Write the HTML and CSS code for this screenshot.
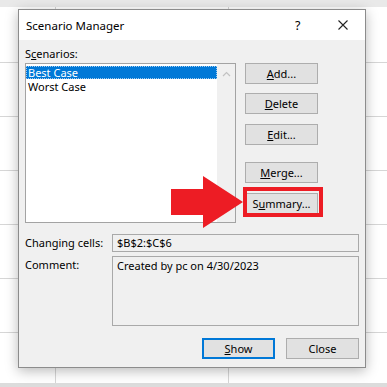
FILE: index.html
```html
<!DOCTYPE html>
<html>
<head>
<meta charset="utf-8">
<link rel="stylesheet" href="styles.css">
</head>
<body>
<div class="desk">
  <div class="dialog">
    <div class="titlebar">
      <span class="title">Scenario Manager</span>
      <span class="help">?</span>
      <svg class="close-x" width="10" height="10" viewBox="0 0 10 10"><path d="M0.5 0.5L9.5 9.5M9.5 0.5L0.5 9.5" stroke="#222" stroke-width="1.1" fill="none"/></svg>
    </div>
    <div class="content">
      <div class="label-top">S<u>c</u>enarios:</div>
      <div class="top-row">
        <div class="listbox">
          <div class="items">
            <div class="item selected">Best Case</div>
            <div class="item">Worst Case</div>
          </div>
          <div class="scrollbar">
            <svg width="9" height="6" viewBox="0 0 9 6"><path d="M1 5L4.5 1.5L8 5" stroke="#c2c2c2" stroke-width="1.2" fill="none"/></svg>
          </div>
        </div>
        <div class="btn-col">
          <div class="btn b-add"><u>A</u>dd...</div>
          <div class="btn b-del"><u>D</u>elete</div>
          <div class="btn b-edit"><u>E</u>dit...</div>
          <div class="btn b-merge"><u>M</u>erge...</div>
          <div class="btn b-sum">S<u>u</u>mmary...</div>
        </div>
      </div>
      <div class="field-row">
        <div class="flabel">Changing cells:</div>
        <div class="field">$B$2:$C$6</div>
      </div>
      <div class="field-row comment-row">
        <div class="flabel">Comment:</div>
        <div class="field comment">Created by pc on 4/30/2023</div>
      </div>
      <div class="bottom-row">
        <div class="btn default"><u>S</u>how</div>
        <div class="btn">Close</div>
      </div>
    </div>
    <svg class="arrow" width="72" height="52" viewBox="0 0 72 52"><path d="M0 13H32V0L72 26L32 52V39H0Z" fill="#ed1c24"/></svg>
    <div class="redbox"></div>
  </div>
</div>
</body>
</html>
```
FILE: styles.css
```css
html, body {
  margin: 0;
  padding: 0;
}
body {
  width: 387px;
  height: 387px;
  overflow: hidden;
  font-family: "Noto Sans", "Liberation Sans", sans-serif;
  font-size: 11px;
  color: #000;
}
.desk {
  width: 387px;
  height: 387px;
  box-sizing: border-box;
  padding: 9px 0 0 18px;
  background:
    linear-gradient(#e9e9e9, #e9e9e9) top left / 387px 7px no-repeat,
    linear-gradient(#dcdcdc, #dcdcdc) bottom left / 387px 4px no-repeat,
    linear-gradient(90deg, transparent 55px, #d6d6d6 55px, #d6d6d6 56px, transparent 56px) 0 0 / 387px 387px no-repeat,
    linear-gradient(90deg, transparent 228px, #d6d6d6 228px, #d6d6d6 229px, transparent 229px) 0 0 / 387px 387px no-repeat,
    repeating-linear-gradient(180deg, transparent 0, transparent 8px, #d6d6d6 8px, #d6d6d6 9px, transparent 9px, transparent 54px) 0 54px / 387px 387px no-repeat,
    #ffffff;
}
.dialog {
  position: relative;
  width: 348px;
  height: 359px;
  box-sizing: border-box;
  border: 1px solid #8c8c8c;
  background: #f0f0f0;
  box-shadow: 0 3px 12px rgba(0, 0, 0, 0.28);
}
.titlebar {
  height: 30px;
  background: #fff;
  display: flex;
  align-items: center;
  padding-left: 7px;
}
.title {
  font-size: 11.5px;
  flex: 1;
}
.help {
  font-size: 12.5px;
  width: 10px;
  margin-right: 33px;
}
.close-x {
  margin-right: 17px;
}
.content {
  padding: 6px 6px 0 6px;
}
.label-top {
  height: 16px;
  line-height: 16px;
  margin-bottom: 1px;
}
.top-row {
  display: flex;
}
.listbox {
  width: 211px;
  height: 160px;
  box-sizing: border-box;
  border: 1px solid #a3a3a3;
  background: #fff;
  display: flex;
  padding: 1px 0 0 0;
}
.items {
  flex: 1;
}
.item {
  height: 13px;
  line-height: 13px;
  padding-left: 2px;
}
.item.selected {
  background: #0078d7;
  color: #fff;
  outline: 1px dotted #9fcbf0;
  outline-offset: -1px;
  margin-top: 1px;
  margin-bottom: 1px;
}
.scrollbar {
  width: 18px;
  background: #f0f0f0;
  margin-top: -1px;
  display: flex;
  justify-content: center;
  padding-top: 7px;
  box-sizing: border-box;
}
.scrollbar svg {
  display: block;
}
.btn-col {
  margin-left: 9px;
  display: flex;
  flex-direction: column;
}
.btn {
  width: 73px;
  height: 21px;
  box-sizing: border-box;
  border: 1px solid #adadad;
  background: #e1e1e1;
  text-align: center;
  line-height: 19px;
}
.b-del { margin-top: 9px; }
.b-edit { margin-top: 10px; }
.b-merge { margin-top: 17px; }
.b-sum { margin-top: 10px; }
.field-row {
  display: flex;
  margin-top: 11px;
}
.comment-row {
  margin-top: 4px;
}
.flabel {
  width: 87px;
  line-height: 17px;
}
.field {
  flex: 1;
  height: 18px;
  box-sizing: border-box;
  border: 1px solid #a9a9a9;
  background: #f0f0f0;
  padding-left: 4px;
  line-height: 16px;
}
.field.comment {
  height: 70px;
  padding-top: 1px;
}
.bottom-row {
  display: flex;
  justify-content: flex-end;
  gap: 11px;
  margin-top: 12px;
}
.bottom-row .btn {
  width: 73px;
}
.btn.default {
  border: 2px solid #0078d7;
  line-height: 17px;
}
.arrow {
  position: absolute;
  left: 152px;
  top: 166px;
}
.redbox {
  position: absolute;
  left: 224px;
  top: 177px;
  width: 80px;
  height: 30px;
  box-sizing: border-box;
  border: 4px solid #ed1c24;
}
```
